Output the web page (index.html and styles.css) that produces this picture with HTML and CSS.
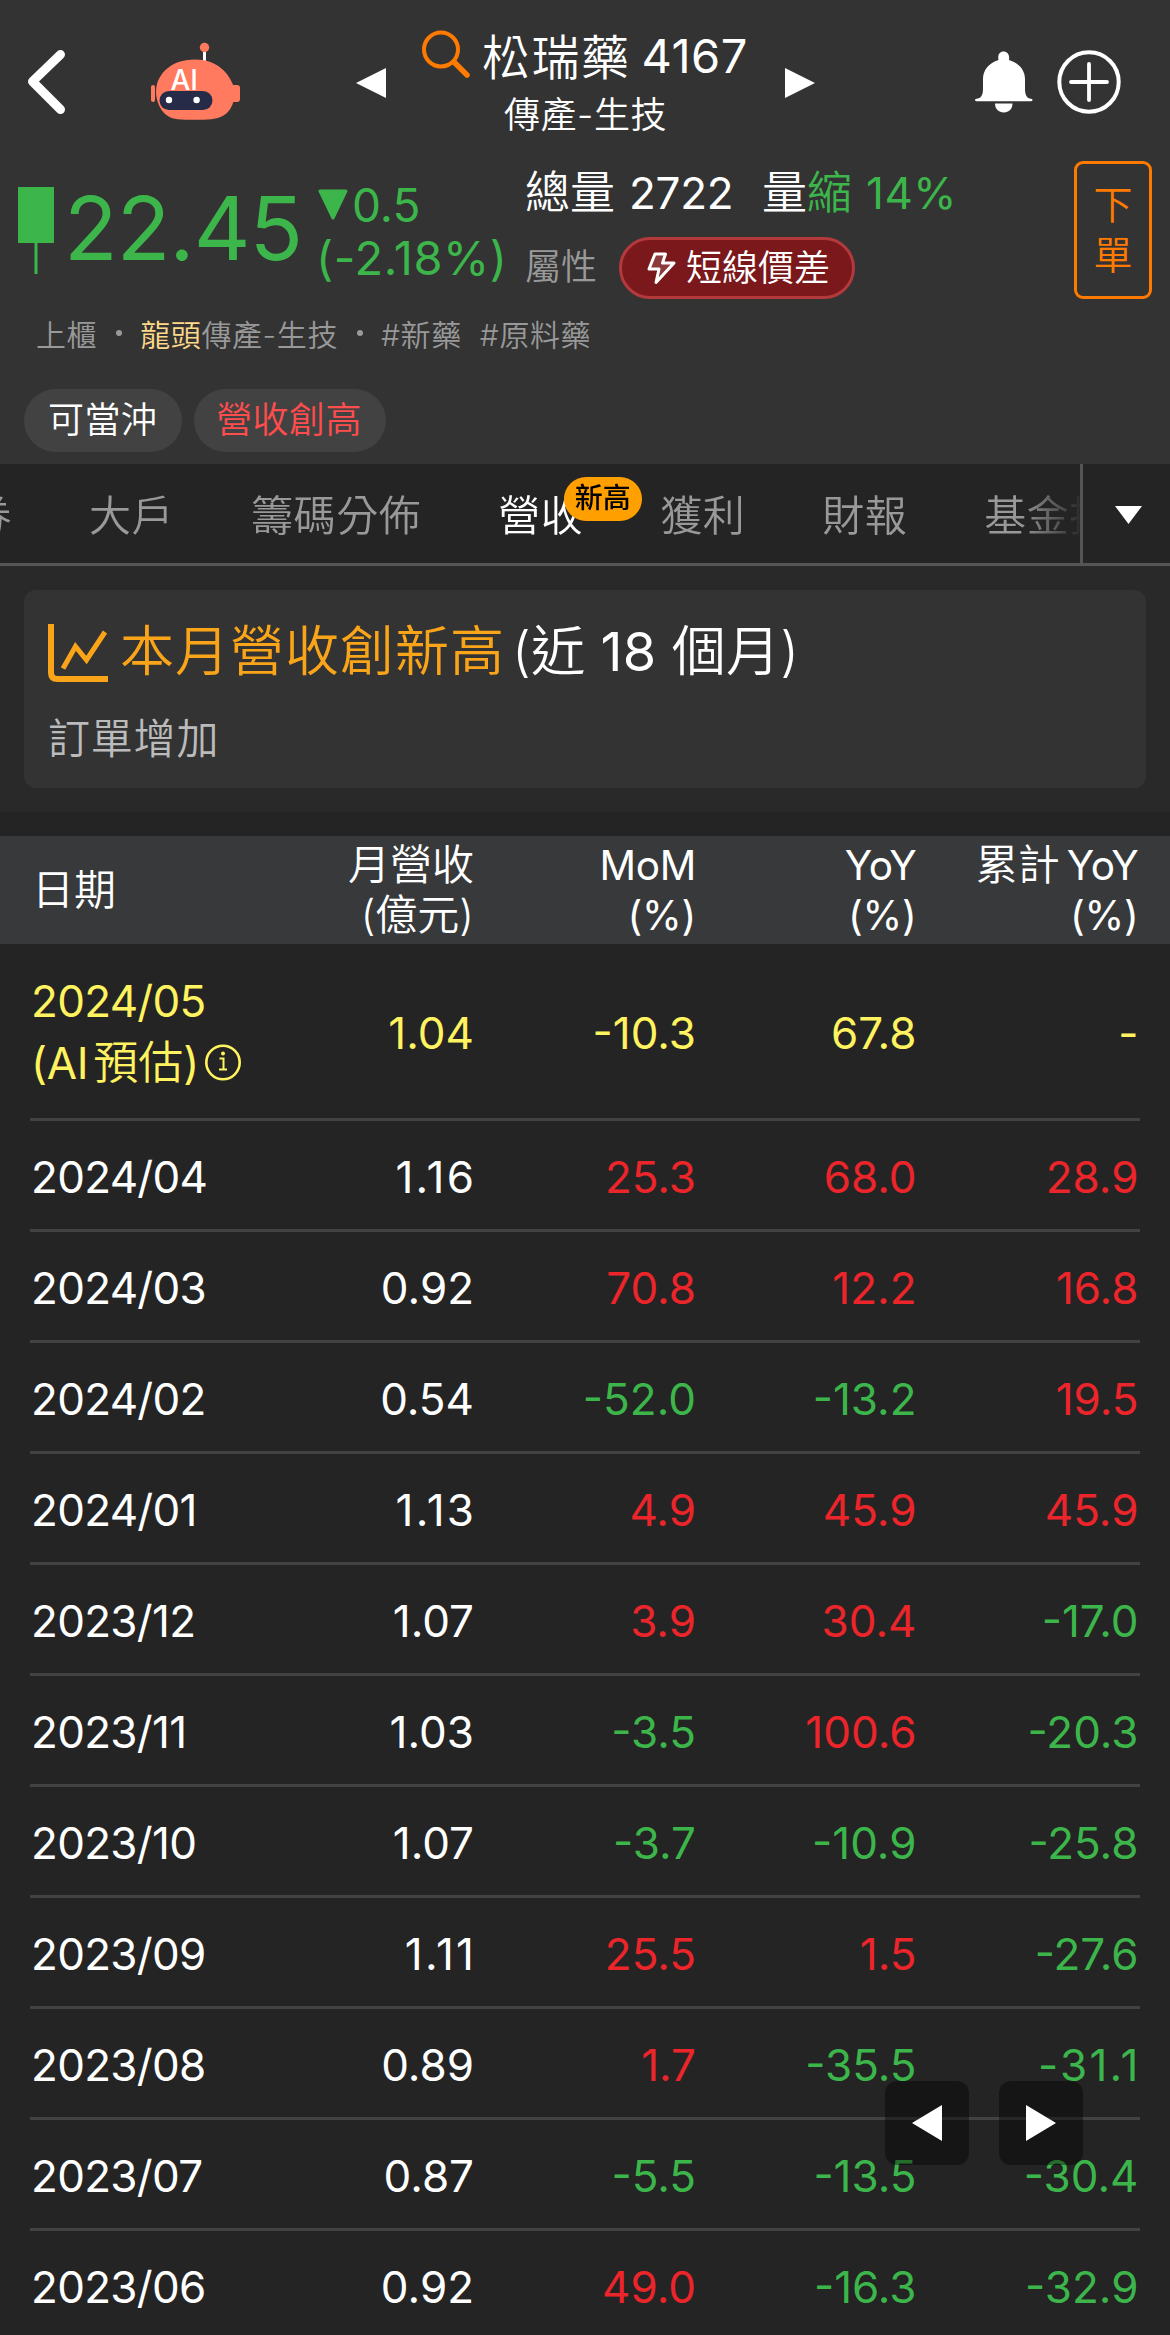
FILE: index.html
```html
<!DOCTYPE html>
<html lang="zh-Hant">
<head>
<meta charset="utf-8">
<title>松瑞藥 4167</title>
<link rel="stylesheet" href="styles.css">
</head>
<body>
<div class="app">
  <section class="summary">
    <nav class="nav">
      <svg class="back" width="37" height="64" viewBox="0 0 37 64"><path d="M32.500 4.500 4.500 31.500l28 28" fill="none" stroke="#fff" stroke-width="9" stroke-linecap="round" stroke-linejoin="round"/></svg>
      <svg class="robot" width="90" height="80" viewBox="0 0 90 80">
        <rect x="52" y="8" width="3" height="14" fill="#fff"/>
        <circle cx="53.500" cy="5.500" r="4.700" fill="#ff7a5e"/>
        <rect x="0" y="43" width="4" height="17" rx="2" fill="#ff7a5e"/>
        <rect x="78" y="43" width="11" height="17" rx="3" fill="#ff7a5e"/>
        <path d="M44 17.500C66 17.500 78 31 82.500 44c2 8 1 17-4 24-4 6-11 8.500-18 9.200-11 .8-23 .8-34 0-7-.7-13-4-17-11C5 58 4 50 6 42 10 29 22 17.500 44 17.500z" fill="#ff7a5e"/>
        <rect x="8.500" y="49" width="53" height="19" rx="9.500" fill="#262c48"/>
        <circle cx="18" cy="58" r="3.200" fill="#fff"/><circle cx="45.600" cy="58" r="3.200" fill="#fff"/>
        <text class="robot-label" x="19.500" y="47.500">AI</text>
      </svg>
      <svg class="prev" width="30" height="30" viewBox="0 0 30 30"><path d="M30 0v30L0 15z" fill="#fff"/></svg>
      <div class="heading">
        <div class="heading-main">
          <svg width="50" height="50" viewBox="0 0 50 50" fill="none" stroke="#ff7a00"><circle cx="19" cy="20.500" r="17" stroke-width="4"/><path d="m32 33 13 13" stroke-width="5.500" stroke-linecap="round"/></svg>
          <span class="name">松瑞藥</span><span class="code">4167</span>
        </div>
        <div class="heading-sub">傳產-生技</div>
      </div>
      <svg class="next" width="30" height="30" viewBox="0 0 30 30"><path d="M0 0v30l30-15z" fill="#fff"/></svg>
      <svg class="bell" width="58" height="62" viewBox="0 0 58 62" fill="#fff"><path d="M23.500 9C22.500 4 24.500.5 28.500.5s6.500 3.500 5.500 8.500C44 12 50 19 50 28v10c0 6 2 9.500 6 9.800 2 .2 2 2.400 0 2.400H1.500c-2 0-2-2.200 0-2.400C6 47.500 8 44 8 38V28C8 19 14 12 23.500 9z"/><path d="M20 52.500h17.500c0 5.500-3.500 9-8.700 9S20 58 20 52.500z"/></svg>
      <svg class="add" width="64" height="64" viewBox="0 0 64 64" fill="none" stroke="#fff"><circle cx="32" cy="32" r="29.700" stroke-width="4"/><path d="M32 14v36M14 32h36" stroke-width="3.800" stroke-linecap="round"/></svg>
    </nav>

    <div class="quote">
      <svg class="candle" width="36" height="87" viewBox="0 0 36 87" fill="#3cb64b"><path d="M0 0h36v56H0zM16.500 56h3v31h-3z"/></svg>
      <div class="price">22.45</div>
      <div class="change">
        <div class="change-line"><svg width="30" height="31" viewBox="0 0 30 31"><path d="M2 2h26L15 29z" fill="#3cb64b" stroke="#3cb64b" stroke-width="3" stroke-linejoin="round"/></svg><span class="diff">0.5</span></div>
        <div class="change-line percent">(-2.18%)</div>
      </div>
      <div class="stats">
        <div class="volume"><span>總量</span><span class="volume-num">2722</span><span class="ratio-label">量</span><span class="down">縮</span><span class="down ratio-num">14%</span></div>
        <div class="attribute">
          <span class="attribute-label">屬性</span>
          <span class="pill"><svg width="30" height="33" viewBox="0 0 30 33"><path d="M8 2h10.500l-3 9H27L9 30.500 12 17H2z" fill="rgba(255,255,255,.15)" stroke="#fff" stroke-width="3" stroke-linejoin="round"/></svg><span class="pill-text">短線價差</span></span>
        </div>
      </div>
      <button class="order">下<br>單</button>
    </div>

    <div class="tags"><span>上櫃</span><i class="dot"></i><span class="leader">龍頭</span><span>傳產-生技</span><i class="dot"></i><span>#新藥</span><span class="tag-last">#原料藥</span></div>
    <div class="chips"><span class="chip">可當沖</span><span class="chip hot">營收創高</span></div>
  </section>

  <div class="tabbar">
    <div class="tabs">
      <span class="tab">資券</span><span class="tab">大戶</span><span class="tab">籌碼分佈</span>
      <span class="tab active">營收<b class="badge">新高</b></span>
      <span class="tab">獲利</span><span class="tab">財報</span><span class="tab">基金持股</span>
    </div>
    <div class="more"><svg width="27" height="18" viewBox="0 0 27 18"><path d="M0 0h27L13.500 18z" fill="#fff"/></svg></div>
  </div>

  <section class="notice">
    <div class="card">
      <div class="card-title">
        <svg width="60" height="58" viewBox="0 0 60 58" fill="none" stroke="#faa519"><path d="M3 0v48.500q0 6.500 6.500 6.500H60" stroke-width="6"/><path d="m15 44.500 12.500-22 11 13.500L57 8" stroke-width="5"/></svg>
        <span class="card-lead">本月營收創新高</span><span class="card-range">(近 <span class="num">18</span> 個月)</span>
      </div>
      <div class="card-note">訂單增加</div>
    </div>
  </section>

  <div class="table">
    <div class="thead"><div>日期</div><div>月營收<br>(億元)</div><div class="latin">MoM<br>(%)</div><div class="latin">YoY<br>(%)</div><div class="latin"><span class="cjk">累計</span>YoY<br>(%)</div></div>
    <div class="row forecast"><div>2024/05<div class="forecast-label">(AI<span class="thin"></span><span class="cjk">預估</span>)<svg class="info" width="36" height="37" viewBox="0 0 36 37"><circle cx="18" cy="18.500" r="16.700" fill="none" stroke="#fff35f" stroke-width="2.600"/><circle cx="18" cy="9.500" r="2" fill="#fff35f"/><path d="M14.500 14.500h4v11m-4.500 0h8" fill="none" stroke="#fff35f" stroke-width="2"/></svg></div></div><div>1.04</div><div>-10.3</div><div>67.8</div><div>-</div></div>
    <div class="row"><div>2024/04</div><div class="ones">1.16</div><div class="up">25.3</div><div class="up">68.0</div><div class="up">28.9</div></div>
    <div class="row"><div>2024/03</div><div>0.92</div><div class="up">70.8</div><div class="up">12.2</div><div class="up">16.8</div></div>
    <div class="row"><div>2024/02</div><div>0.54</div><div class="down">-52.0</div><div class="down">-13.2</div><div class="up">19.5</div></div>
    <div class="row"><div>2024/01</div><div class="ones">1.13</div><div class="up">4.9</div><div class="up">45.9</div><div class="up">45.9</div></div>
    <div class="row"><div>2023/12</div><div>1.07</div><div class="up">3.9</div><div class="up">30.4</div><div class="down">-17.0</div></div>
    <div class="row"><div>2023/11</div><div>1.03</div><div class="down">-3.5</div><div class="up">100.6</div><div class="down">-20.3</div></div>
    <div class="row"><div>2023/10</div><div>1.07</div><div class="down">-3.7</div><div class="down">-10.9</div><div class="down">-25.8</div></div>
    <div class="row"><div>2023/09</div><div class="ones">1.11</div><div class="up">25.5</div><div class="up">1.5</div><div class="down">-27.6</div></div>
    <div class="row"><div>2023/08</div><div>0.89</div><div class="up">1.7</div><div class="down">-35.5</div><div class="down ones">-31.1</div></div>
    <div class="row"><div>2023/07</div><div>0.87</div><div class="down">-5.5</div><div class="down">-13.5</div><div class="down">-30.4</div></div>
    <div class="row"><div>2023/06</div><div>0.92</div><div class="up">49.0</div><div class="down">-16.3</div><div class="down">-32.9</div></div>
  </div>

  <div class="pager">
    <button><svg width="30" height="36" viewBox="0 0 30 36"><path d="M30 0v36L0 18z" fill="#fff"/></svg></button>
    <button><svg width="30" height="36" viewBox="0 0 30 36"><path d="M0 0v36l30-18z" fill="#fff"/></svg></button>
  </div>
</div>
</body>
</html>
```
FILE: styles.css
```css
* { box-sizing: border-box; }
body { margin: 0; background: #242424; }
svg { display: block; flex: none; }
button { font: inherit; color: inherit; padding: 0; border: 0; background: none; }

.app {
  position: relative;
  width: 1170px;
  height: 2335px;
  overflow: hidden;
  background: #242424;
  color: #fff;
  font-family: Inter, "Noto Sans CJK TC", sans-serif;
  font-weight: 350;
  white-space: nowrap;
}
.up { color: #ec252b; }
.down { color: #3cb64b; }
.thin { display: inline-block; width: 5px; }
.num { font-weight: 400; }

/* summary */
.summary { height: 464px; background: #333; }
.nav { display: flex; align-items: center; height: 160px; padding-top: 4px; }
.back { margin-left: 28px; }
.robot { margin-left: 86px; }
.robot-label { font: 500 28px Inter, sans-serif; fill: #fff; }
.prev { margin-left: 115px; margin-top: 2px; }
.heading { width: 399px; }
.heading-main { display: flex; align-items: center; padding-left: 36px; height: 60px; font-size: 48px; }
.heading-main .name { margin-left: 10px; letter-spacing: 1.500px; }
.heading-main .code { margin-left: 11px; font-size: 47px; font-weight: 400; letter-spacing: 0.500px; line-height: 56px; padding-top: 3px; }
.heading-sub { height: 56px; line-height: 62px; text-align: center; font-size: 36px; letter-spacing: 0.500px; }
.next { margin-top: 2px; }
.bell { margin-left: 160px; }
.add { margin-left: 24px; }

.quote { display: flex; height: 140px; }
.candle { margin: 27px 0 0 18px; }
.price { width: 247px; margin-left: 10px; line-height: 136px; font-size: 88px; font-weight: 400; color: #3cb64b; letter-spacing: -1px; }
.change { width: 208px; margin: 19px 0 0 7px; font-size: 46px; font-weight: 400; color: #3cb64b; }
.change-line { display: flex; height: 53px; line-height: 53px; }
.change-line svg { margin-top: 10px; }
.percent { margin-left: -2px; font-size: 47px; line-height: 51px; letter-spacing: 0.600px; }
.diff { margin-left: 4px; }
.stats { width: 549px; margin-left: -1px; }
.volume { display: flex; height: 66px; line-height: 66px; font-size: 45px; }
.volume-num { margin-left: 14px; width: 103px; font-size: 44px; font-weight: 400; letter-spacing: -0.300px; }
.ratio-label { margin-left: 30px; }
.ratio-num { margin-left: 14px; font-size: 44px; font-weight: 400; letter-spacing: 0.500px; }
.attribute { display: flex; align-items: center; height: 62px; margin-top: 11px; font-size: 36px; }
.attribute-label { width: 94px; line-height: 58px; padding-bottom: 3px; color: #999; }
.pill { display: flex; align-items: center; gap: 9px; width: 236px; height: 62px; padding-left: 25px; border: 3px solid #b3393b; border-radius: 31px; background: #7a181b; }
.pill-text { line-height: 56px; }
.order { width: 78px; height: 138px; margin-top: 1px; border: 3px solid #ff7a00; border-radius: 9px; color: #ff7a00; font-size: 39px; line-height: 50px; }

.tags { display: flex; align-items: center; height: 70px; margin-top: -2px; padding-left: 36px; font-size: 30px; letter-spacing: 0.600px; color: #999; }
.dot { width: 6px; height: 6px; margin: 0 18px 0 19px; border-radius: 50%; background: #999; }
.leader { color: #ffd98a; }
.tag-last { margin-left: 18px; }
.chips { display: flex; gap: 12px; margin-top: 21px; padding-left: 24px; }
.chip { height: 63px; padding: 0 25px 0 24px; border-radius: 32px; background: #424242; font-size: 36px; line-height: 63px; letter-spacing: 0.400px; }
.chip.hot { padding: 0 24px 0 22px; color: #ff4d4d; }

/* tabs */
.tabbar { display: flex; height: 102px; border-bottom: 3px solid #555; background: #242424; }
.tabs { display: flex; gap: 76.800px; width: 1080px; padding-top: 6px; overflow: hidden; -webkit-mask-image: linear-gradient(90deg, #000 1020px, transparent 1085px); mask-image: linear-gradient(90deg, #000 1020px, transparent 1085px); }
.tab { position: relative; flex: none; line-height: 92px; font-size: 42px; letter-spacing: 0.600px; color: #999; }
.tab:first-child { margin-left: -73px; }
.tab.active { color: #fff; }
.badge { position: absolute; left: 65.500px; top: 7px; width: 78px; height: 44px; border-radius: 22px; background: #ff9f00; color: #000; font-size: 28px; font-weight: 500; line-height: 43px; text-align: center; letter-spacing: 0; }
.more { display: flex; align-items: center; justify-content: center; flex: 1; border-left: 3px solid #555; padding-left: 3px; padding-top: 3px; }

/* notice */
.notice { height: 246px; padding: 24px; background: #292929; }
.card { height: 198px; padding: 24px; border-radius: 12px; background: #333; }
.card-title { display: flex; align-items: flex-start; height: 72px; font-size: 54px; line-height: 76px; }
.card-title svg { margin-top: 10px; }
.card-lead { margin-left: 12px; letter-spacing: 1px; color: #faa519; }
.card-range { margin-left: 7px; letter-spacing: 0.200px; }
.card-note { height: 60px; margin-top: 23px; line-height: 60px; font-size: 42px; letter-spacing: 0.800px; color: #bbb; }

/* table */
.table { margin-top: 24px; }
.thead, .row { display: grid; grid-template-columns: 222px 221px 222px 220.500px 222px; align-items: center; text-align: right; }
.thead > :first-child, .row > :first-child { text-align: left; }
.row > :first-child { letter-spacing: -0.700px; }
.thead { height: 108px; padding: 0 31px; background: #38393b; font-size: 42px; line-height: 50px; }
.thead > :first-child { padding-left: 1px; }
.latin { padding-top: 1px; font-size: 40.500px; font-weight: 400; letter-spacing: -0.300px; }
.latin .cjk { margin-right: 7px; font-size: 42px; font-weight: 350; letter-spacing: 0; }
.row { height: 111px; margin: 0 30px; padding: 3px 1px 0; border-bottom: 3px solid #424242; font-size: 44px; font-weight: 400; line-height: 62px; }
.ones { letter-spacing: 2.200px; margin-right: -2.200px; }
.forecast { height: 177px; color: #fff35f; }
.forecast > :first-child { padding-bottom: 2px; }
.forecast-label { display: flex; align-items: center; height: 62px; letter-spacing: -0.300px; }
.forecast-label .cjk { font-size: 45px; font-weight: 350; letter-spacing: 0; }
.info { margin-left: 6px; }

.pager { position: absolute; left: 885px; top: 2081px; display: flex; gap: 30px; }
.pager button { display: grid; place-items: center; width: 84px; height: 84px; border-radius: 12px; background: rgba(0, 0, 0, .4); }
```
